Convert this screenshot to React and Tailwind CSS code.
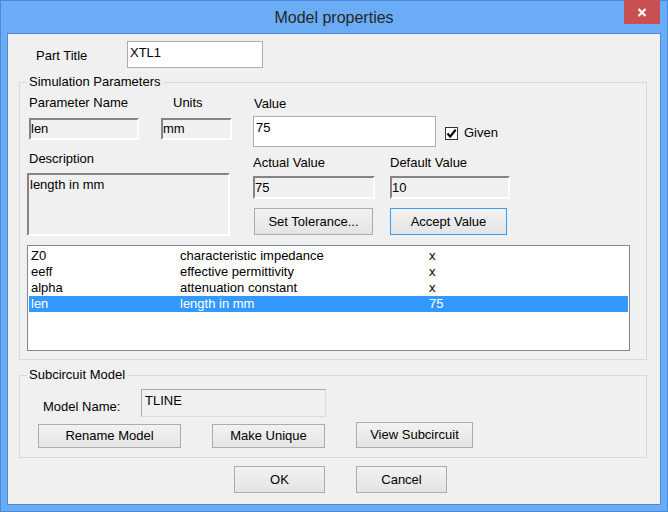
import React from 'react';

const sunken =
  'border-2 border-t-[#858585] border-l-[#858585] border-r-white border-b-white bg-[#f0f0f0]';

function Btn({ className = '', children, focused }) {
  return (
    <div
      className={`flex items-center justify-center border bg-linear-to-b from-[#f2f2f2] to-[#e4e4e4] ${
        focused ? 'border-[#3c9cf0]' : 'border-[#acacac]'
      } ${className}`}
    >
      {children}
    </div>
  );
}

function Group({ label, className = '', children }) {
  return (
    <div className={`border border-[#d9d9d9] ${className}`}>
      <div className="-mt-[9px] ml-[7px] w-fit bg-[#f0f0f0] px-[2px] leading-[16px]">{label}</div>
      {children}
    </div>
  );
}

const rows = [
  ['Z0', 'characteristic impedance', 'x'],
  ['eeff', 'effective permittivity', 'x'],
  ['alpha', 'attenuation constant', 'x'],
  ['len', 'length in mm', '75'],
];

export default function App() {
  return (
    <div className="relative h-[512px] w-[668px] bg-[#6aadf6] font-['Liberation_Sans',Arial,sans-serif] text-[13px] text-black shadow-[inset_0_0_0_1px_#4d8ad3]">
      {/* title bar */}
      <div className="flex h-[33px] justify-center pt-[8px]">
        <span className="text-[16px] leading-[20px] text-[#262626]">Model properties</span>
      </div>
      <div className="absolute right-[8px] top-0 flex h-[24px] w-[36px] items-center justify-center bg-[#c75050]">
        <svg width="10" height="9" viewBox="0 0 10 9">
          <path d="M1.5 1 L8.5 8 M8.5 1 L1.5 8" stroke="white" strokeWidth="2.2" />
        </svg>
      </div>

      {/* client */}
      <div className="ml-[7px] h-[472px] w-[654px] border border-[#4f8bd2] bg-[#f0f0f0]">
        {/* part title */}
        <div className="flex items-start pt-[7px]">
          <div className="mt-[7px] w-[119px] pl-[28px] leading-[16px]">Part Title</div>
          <div className="h-[27px] w-[136px] border border-[#acacac] bg-white pl-[2px] pt-[3px] leading-[16px]">
            XTL1
          </div>
        </div>

        {/* simulation parameters */}
        <Group label="Simulation Parameters" className="ml-[11px] mt-[14px] h-[278px] w-[628px]">
          <div className="flex items-start">
            <div className="ml-[7px] w-[205px]">
              <div className="mt-[5px] flex leading-[16px]">
                <span className="ml-[2px] w-[144px]">Parameter Name</span>
                <span>Units</span>
              </div>
              <div className="mt-[7px] flex">
                <div className={`ml-[2px] h-[22px] w-[110px] leading-[18px] ${sunken}`}>len</div>
                <div className={`ml-[22px] h-[22px] w-[71px] leading-[18px] ${sunken}`}>mm</div>
              </div>
              <div className="ml-[2px] mt-[11px] leading-[16px]">Description</div>
              <div className={`mt-[6px] h-[63px] w-[203px] pl-[1px] pt-[2px] leading-[16px] ${sunken}`}>
                length in mm
              </div>
            </div>

            <div className="ml-[21px]">
              <div className="ml-[1px] mt-[6px] leading-[16px]">Value</div>
              <div className="mt-[4px] flex items-start">
                <div className="h-[31px] w-[183px] border border-[#acacac] bg-white pl-[2px] pt-[3px] leading-[16px]">
                  75
                </div>
                <div className="ml-[9px] mt-[11px] flex h-[13px] w-[13px] items-center justify-center border border-[#333] bg-white">
                  <svg width="11" height="11" viewBox="0 0 11 11">
                    <path d="M1.5 5.5 L4.2 8.6 L9.6 1.8" stroke="black" strokeWidth="2.2" fill="none" />
                  </svg>
                </div>
                <span className="ml-[6px] mt-[9px] leading-[16px]">Given</span>
              </div>
              <div className="mt-[8px] flex leading-[16px]">
                <span className="w-[137px]">Actual Value</span>
                <span>Default Value</span>
              </div>
              <div className="mt-[5px] flex">
                <div className={`h-[23px] w-[122px] leading-[19px] ${sunken}`}>75</div>
                <div className={`ml-[15px] h-[23px] w-[120px] leading-[19px] ${sunken}`}>10</div>
              </div>
              <div className="mt-[9px] flex">
                <Btn className="ml-[1px] h-[27px] w-[119px]">Set Tolerance...</Btn>
                <Btn className="ml-[17px] h-[27px] w-[117px]" focused>
                  Accept Value
                </Btn>
              </div>
            </div>
          </div>

          <div className="ml-[7px] mt-[9px] h-[106px] w-[603px] border border-[#828790] bg-white px-[1px] pt-[2px]">
            {rows.map((r, i) => (
              <div
                key={r[0]}
                className={`flex h-[16px] pl-[2px] leading-[16px] ${
                  i === 3 ? 'bg-[#3399ff] text-white' : ''
                }`}
              >
                <span className="w-[149px]">{r[0]}</span>
                <span className="w-[249px]">{r[1]}</span>
                <span>{r[2]}</span>
              </div>
            ))}
          </div>
        </Group>

        {/* subcircuit model */}
        <Group label="Subcircuit Model" className="ml-[11px] mt-[15px] h-[83px] w-[628px]">
          <div className="mt-[6px] flex items-start">
            <div className="ml-[23px] mt-[10px] w-[98px] leading-[16px]">Model Name:</div>
            <div className="h-[28px] w-[185px] border border-t-[#a9a9a9] border-l-[#a9a9a9] border-r-[#dcdcdc] border-b-[#dcdcdc] bg-[#f0f0f0] pl-[3px] pt-[3px] leading-[16px]">
              TLINE
            </div>
          </div>
          <div className="mt-[5px] flex items-start">
            <Btn className="ml-[18px] mt-[2px] h-[24px] w-[143px]">Rename Model</Btn>
            <Btn className="ml-[31px] mt-[2px] h-[24px] w-[113px]">Make Unique</Btn>
            <Btn className="ml-[31px] h-[26px] w-[117px]">View Subcircuit</Btn>
          </div>
        </Group>

        {/* footer */}
        <div className="mt-[8px] flex">
          <Btn className="ml-[226px] h-[27px] w-[91px]">OK</Btn>
          <Btn className="ml-[31px] h-[27px] w-[91px]">Cancel</Btn>
        </div>
      </div>
    </div>
  );
}
